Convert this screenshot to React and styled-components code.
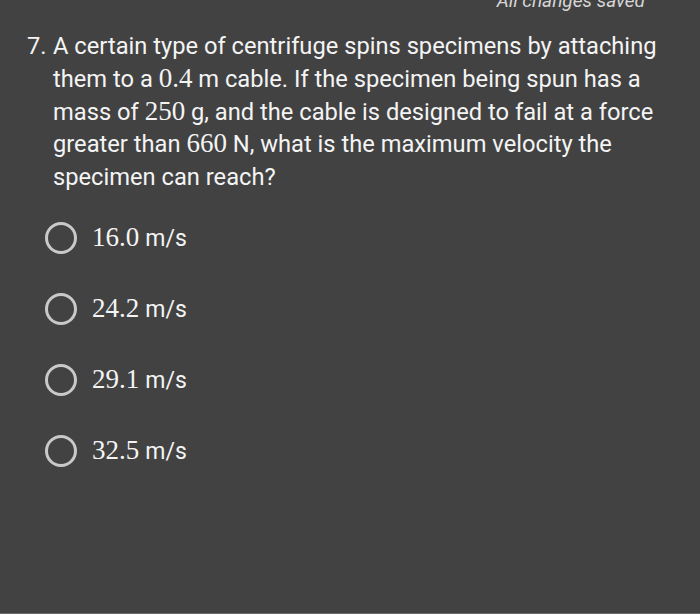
import React from 'react'
import styled, { createGlobalStyle } from 'styled-components'

const GlobalStyle = createGlobalStyle`
  html, body {
    margin: 0;
    padding: 0;
    background: #424242;
  }
  body {
    font-family: Roboto, 'Noto Sans', sans-serif;
  }
`

const Page = styled.div`
  width: 700px;
  height: 614px;
  box-sizing: border-box;
  background: #424242;
  border-bottom: 1px solid #6a6a6a;
  overflow: hidden;
  color: #f4f4f4;
`

const SavedBar = styled.div`
  height: 14px;
  display: flex;
  justify-content: flex-end;
  padding-right: 55px;
`

const Saved = styled.span`
  font-style: italic;
  font-size: 19px;
  line-height: 19px;
  color: #d6d6d6;
  margin-top: -9px;
`

const Question = styled.div`
  display: flex;
  padding: 16px 0 0 27px;
  font-size: 23.7px;
  line-height: 32.8px;
`

const Number = styled.span`
  width: 26px;
  flex-shrink: 0;
`

const Stem = styled.p`
  margin: 0;
  width: 616px;
`

const Math = styled.span`
  font-family: 'Liberation Serif', 'DejaVu Serif', serif;
  font-size: 27px;
  line-height: 1;
`

const Options = styled.div`
  display: flex;
  flex-direction: column;
  gap: 38px;
  padding: 28px 0 0 45px;
`

const Option = styled.label`
  display: flex;
  align-items: center;
  gap: 15px;
  height: 33px;
  font-size: 23px;
`

const Radio = styled.span`
  width: 26px;
  height: 26px;
  border: 3px solid #c9c9c9;
  border-radius: 50%;
  flex-shrink: 0;
`

const Unit = styled.span`
  margin-left: 6px;
`

const answers = ['16.0', '24.2', '29.1', '32.5']

const App = () => (
  <Page>
    <GlobalStyle />
    <SavedBar>
      <Saved>All changes saved</Saved>
    </SavedBar>
    <Question>
      <Number>7.</Number>
      <Stem>
        A certain type of centrifuge spins specimens by attaching them to a{' '}
        <Math>0.4</Math> m cable. If the specimen being spun has a mass of{' '}
        <Math>250</Math> g, and the cable is designed to fail at a force greater than{' '}
        <Math>660</Math> N, what is the maximum velocity the specimen can reach?
      </Stem>
    </Question>
    <Options>
      {answers.map(a => (
        <Option key={a}>
          <Radio />
          <span>
            <Math>{a}</Math>
            <Unit>m/s</Unit>
          </span>
        </Option>
      ))}
    </Options>
  </Page>
)

export default App
